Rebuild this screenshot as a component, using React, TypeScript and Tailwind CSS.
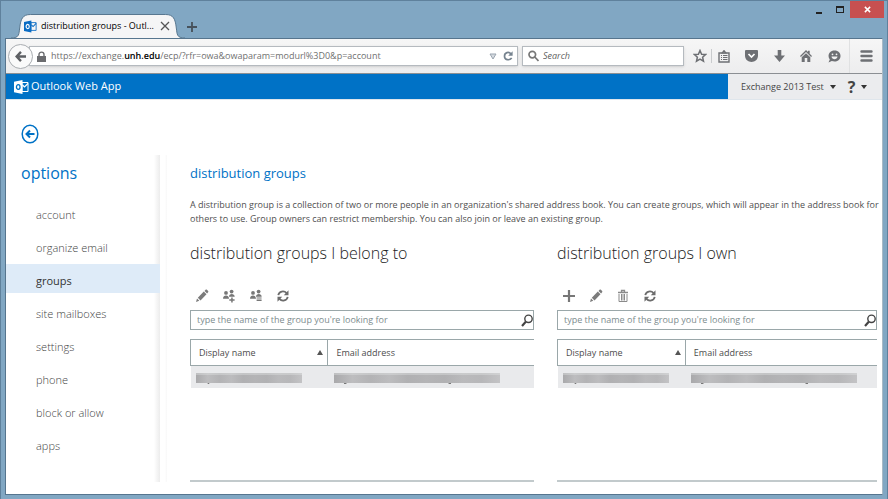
import type { ReactNode } from "react";

const navItems = [
  "account",
  "organize email",
  "groups",
  "site mailboxes",
  "settings",
  "phone",
  "block or allow",
  "apps",
];

function OutlookLogo({ className, main, ink }: { className: string; main: string; ink: string }) {
  return (
    <svg viewBox="0 0 30 28" className={className} aria-hidden="true">
      <path d="M16 5h12v18H16z" fill="none" stroke={main} strokeWidth="2" />
      <path d="M17 10l4 4 7-7" fill="none" stroke={main} strokeWidth="2.4" />
      <path d="M0 3.5L17 0v28L0 24.5z" fill={main} />
      <ellipse cx="8.5" cy="14" rx="3.6" ry="4.8" fill="none" stroke={ink} strokeWidth="2.6" />
    </svg>
  );
}

function PencilIcon() {
  return (
    <svg viewBox="0 0 14 14" className="size-3.5" fill="#7b7b7b" aria-hidden="true">
      <path d="M1 13l1-3.500 2.300 2.300zM2.800 8.700l6-6.200 2.700 2.700-6 6.200zM9.500 1.900l1.100-1.100c.4-.4.9-.4 1.300 0l1.200 1.200c.4.4.4.9 0 1.300L12.100 4.500z" />
    </svg>
  );
}

function PeopleIcon({ kind }: { kind: "join" | "leave" }) {
  return (
    <svg viewBox="0 0 14 14" className="size-3.5" fill="#777" aria-hidden="true">
      <circle cx="4" cy="3.900" r="1.900" />
      <circle cx="9.600" cy="2.600" r="1.900" />
      <path d="M1 9.800c0-4.400 6-4.400 6 0zM7 7.700C6.800 4 12.700 4 12.700 7.700z" />
      {kind === "join" ? (
        <path d="M9.200 8.400h1.500v1.900h1.900v1.400h-1.900v1.900H9.200v-1.900H7.300v-1.400h1.900z" />
      ) : (
        <path d="M7.600 8.500h5v.9h-5zM7.600 10.400h5v1.500h-5z" />
      )}
    </svg>
  );
}

function RefreshIcon() {
  return (
    <svg viewBox="0 0 14 14" className="size-3.5" fill="none" stroke="#6c6c6c" strokeWidth="1.800" aria-hidden="true">
      <path d="M2.300 6.200C3 2.200 8 1.200 10.600 4.200M11.700 7.800C11 11.800 6 12.800 3.400 9.800" />
      <path d="M12.500 1.200v5H7.800zM1.500 12.800v-5h4.700z" fill="#6c6c6c" stroke="none" />
    </svg>
  );
}

function TrashIcon() {
  return (
    <svg viewBox="0 0 14 14" className="size-3.5" fill="none" stroke="#8a8a8a" aria-hidden="true">
      <path d="M2 3.500h10M5.500 3V1.500h3V3" strokeWidth="1.300" />
      <path d="M3 5v7.500h8V5M5.500 5v6.500M7 5v6.500M8.500 5v6.500" />
    </svg>
  );
}

function PlusIcon({ className }: { className: string }) {
  return (
    <svg viewBox="0 0 12 12" className={className} stroke="currentColor" strokeWidth="2.200" aria-hidden="true">
      <path d="M6 0v12M0 6h12" />
    </svg>
  );
}

function IconButton({ label, children }: { label: string; children: ReactNode }) {
  return (
    <button type="button" aria-label={label} className="flex size-3.5 items-center justify-center text-[#777]">
      {children}
    </button>
  );
}

const smudgeShades = ["#a9a9ab", "#bdbdbf", "#b3b3b5", "#bcbcbe", "#b0b0b2", "#b4b4b6", "#b1b1b3", "#bababc", "#b7b7b9", "#c3c3c5"];

function Smudge({ id, tails, className }: { id: string; tails: number[]; className: string }) {
  return (
    <svg viewBox="0 0 100 11" preserveAspectRatio="none" className={className} role="img" aria-label="Hidden value">
      <defs>
        <linearGradient id={id}>
          {smudgeShades.map((shade, i) => (
            <stop key={i} offset={i / 9} stopColor={shade} />
          ))}
        </linearGradient>
      </defs>
      <rect width="100" height="10" fill={"url(#" + id + ")"} />
      <rect width="100" height="2" fill="#e9eaec" opacity=".35" />
      {tails.map((x) => (
        <rect key={x} x={x} y="10" width="1.500" height="1" fill="#777" />
      ))}
    </svg>
  );
}

function GroupPanel({ id, title, tools }: { id: string; title: string; tools: ReactNode }) {
  return (
    <section className="flex min-w-0 flex-col">
      <h2 className="text-[16px] leading-6 font-light whitespace-nowrap text-[#222]">{title}</h2>
      <div className="mt-6 flex h-3.5 gap-[13px] pl-[5px]">{tools}</div>
      <form className="mt-[7px] flex h-5 items-center border border-[#9aa7a9]" onSubmit={(e) => e.preventDefault()}>
        <input
          aria-label={title}
          placeholder="type the name of the group you're looking for"
          className="min-w-0 flex-1 pl-1.5 text-[9px] leading-4 text-[#555] outline-none placeholder:text-[#7d8c8e]"
        />
        <button type="submit" aria-label="Search groups" className="flex">
          <svg viewBox="0 0 12 13" className="h-[13px] w-3" fill="none" stroke="#444" aria-hidden="true">
            <circle cx="7.500" cy="4.800" r="3.700" strokeWidth="1.400" />
            <path d="M4.800 7.800L1 12" strokeWidth="2.200" />
          </svg>
        </button>
      </form>
      <div className="mt-[9px] flex-1 border-b-2 border-[#c2cacc]">
        <table className="w-full table-fixed border-collapse text-left text-[9px]">
          <thead>
            <tr className="h-[26px] border-t border-b border-[#9aa7a9] text-[#4c4c4c]">
              <th scope="col" className="w-2/5 border-r border-l border-[#9aa7a9] px-2 font-normal">
                <div className="flex items-center justify-between">
                  Display name
                  <svg viewBox="0 0 6 5" className="-mr-1 h-[5px] w-1.5 fill-[#555]" aria-hidden="true">
                    <path d="M3 0l3 5H0z" />
                  </svg>
                </div>
              </th>
              <th scope="col" className="px-2 font-normal">Email address</th>
            </tr>
          </thead>
          <tbody>
            <tr className="h-[22px] bg-[#e9eaec]">
              <td className="pl-[5px]">
                <Smudge id={id + "-name"} tails={[11]} className="mt-1 h-[11px] w-[106px]" />
              </td>
              <td className="pl-1.5">
                <Smudge id={id + "-mail"} tails={[6, 69]} className="mt-1 h-[11px] w-[166px]" />
              </td>
            </tr>
          </tbody>
        </table>
      </div>
    </section>
  );
}

function TitleBar() {
  return (
    <header className="flex h-[37px] items-start justify-between pl-1.5">
      <div className="flex h-[37px] items-end">
        <div className="relative flex h-6 w-[174px] items-center pl-[13px]">
          <svg viewBox="0 0 180 24" preserveAspectRatio="none" className="absolute inset-0 size-full" aria-hidden="true">
            <path d="M0 24C9 24 8 20 9 14C10 5 12 .5 20 .5H160C168 .5 170 5 171 14C172 20 171 24 180 24z" fill="#f5f5f6" />
            <path d="M0 24C9 24 8 20 9 14C10 5 12 .5 20 .5H160C168 .5 170 5 171 14C172 20 171 24 180 24" fill="none" stroke="#56758e" />
          </svg>
          <div className="relative flex w-full items-center">
            <OutlookLogo className="h-[13px] w-[13px]" main="#0a6cc4" ink="#fff" />
            <span className="ml-1 w-[115px] text-[9px] leading-4 whitespace-nowrap text-black">distribution groups - Outl...</span>
            <button type="button" aria-label="Close tab" className="ml-1 flex size-2.5 items-center justify-center">
              <svg viewBox="0 0 10 10" className="size-2.5" stroke="#555" strokeWidth="1.300" aria-hidden="true">
                <path d="M1 1l8 8M9 1l-8 8" />
              </svg>
            </button>
          </div>
        </div>
        <button type="button" aria-label="Open a new tab" className="mb-1.5 ml-0.5 flex text-[#47525c]">
          <PlusIcon className="size-2.5" />
        </button>
      </div>
      <div className="-mr-px flex h-[17px] items-stretch">
        <button type="button" aria-label="Minimize" className="flex w-[21px] items-end justify-center pb-1">
          <span className="h-0.5 w-1.5 bg-[#222]" />
        </button>
        <button type="button" aria-label="Maximize" className="flex w-[21px] items-center justify-center">
          <span className="h-[7px] w-2 border border-t-2 border-[#222]" />
        </button>
        <button type="button" aria-label="Close" className="flex w-[34px] items-center justify-center bg-[#c75050]">
          <svg viewBox="0 0 8 8" className="size-[7px]" stroke="#fff" strokeWidth="1.700" aria-hidden="true">
            <path d="M1 1l6 6M7 1L1 7" />
          </svg>
        </button>
      </div>
    </header>
  );
}

function BrowserBar() {
  return (
    <div className="flex h-[35px] shrink-0 items-center border-b border-[#8b8f93] bg-gradient-to-b from-[#f6f6f6] to-[#ededee]">
      <button type="button" aria-label="Back" className="z-10 ml-[2px] flex size-[25px] shrink-0 items-center justify-center rounded-full border border-[#a9adb1] bg-[#fafafa]">
        <svg viewBox="0 0 12 12" className="size-[11px]" fill="none" stroke="#5e6064" strokeWidth="2.600" aria-hidden="true">
          <path d="M12 6H2M6.500 1L1.800 6l4.700 5" />
        </svg>
      </button>
      <div className="relative -ml-1 flex h-5 min-w-0 flex-1 items-center border border-[#b5babf] bg-white pl-[7px] text-[9px] shadow-sm">
        <svg viewBox="0 0 9 11" className="h-[11px] w-[9px]" fill="#6b6c6f" aria-hidden="true">
          <path d="M0 5h9v6H0z" />
          <path d="M2 5V3.500C2 .3 7 .3 7 3.500V5" fill="none" stroke="#6b6c6f" strokeWidth="1.400" />
        </svg>
        <label htmlFor="url" className="ml-[5px] flex-1 truncate text-[#707070]">
          https://exchange.<span className="font-semibold text-black">unh.edu</span>/ecp/?rfr=owa&amp;owaparam=modurl%3D0&amp;p=account
        </label>
        <input id="url" className="absolute inset-y-0 left-6 right-10 bg-transparent outline-none" />
        <button type="button" aria-label="Show history" className="mr-1.5 flex">
          <svg viewBox="0 0 8 7" className="h-[7px] w-2" fill="#d5dae0" stroke="#9ba5b0" aria-hidden="true">
            <path d="M1 1h6L4 6z" />
          </svg>
        </button>
        <button type="button" aria-label="Reload" className="mr-1 flex">
          <svg viewBox="0 0 10 10" className="size-2.5" fill="none" stroke="#76838f" strokeWidth="1.700" aria-hidden="true">
            <path d="M8 3C5.800.2 1.500 1.500 1.500 5.200S6.300 10 8.700 7" />
            <path d="M9.600.3v4.500H5.200z" fill="#76838f" stroke="none" />
          </svg>
        </button>
      </div>
      <div className="ml-1 flex h-5 w-[162px] shrink-0 items-center border border-[#b5babf] bg-white pl-[5px] shadow-sm">
        <svg viewBox="0 0 11 12" className="h-3 w-[11px] shrink-0" fill="none" stroke="#777" strokeWidth="1.700" aria-hidden="true">
          <circle cx="4.300" cy="4.600" r="3.300" />
          <path d="M6.800 7l3.700 4" />
        </svg>
        <input aria-label="Search" placeholder="Search" className="ml-1 w-full text-[9px] outline-none placeholder:text-[#606060] placeholder:italic" />
      </div>
      <nav aria-label="Browser tools" className="ml-[9px] flex items-center text-[#6e7074]">
        <button type="button" aria-label="Bookmark" className="flex">
          <svg viewBox="0 0 14 14" className="size-3.5" fill="none" stroke="currentColor" strokeWidth="1.500" aria-hidden="true">
            <path d="M7 1.500l1.600 3.700 4 .3-3 2.700.9 4L7 10.100l-3.500 2.100.9-4-3-2.700 4-.3z" />
          </svg>
        </button>
        <span className="ml-1 h-3.5 w-px bg-[#c9cbcd]" />
        <button type="button" aria-label="Bookmarks menu" className="ml-1.5 flex">
          <svg viewBox="0 0 12 13" className="h-[13px] w-3" fill="none" stroke="currentColor" strokeWidth="1.400" aria-hidden="true">
            <path d="M1 3h10v9H1z" />
            <path d="M4 3l2-2.500L8 3zM3 5.500h1M5 5.500h4.500M3 7.500h1M5 7.500h4.500M3 9.500h1M5 9.500h4.500" strokeWidth="1.100" />
          </svg>
        </button>
        <button type="button" aria-label="Pocket" className="ml-[15px] flex">
          <svg viewBox="0 0 13 12" className="h-3 w-[13px]" aria-hidden="true">
            <path d="M1 0h11q1 0 1 1v4.500C13 14 0 14 0 5.500V1q0-1 1-1z" fill="currentColor" />
            <path d="M3.500 4l3 3 3-3" fill="none" stroke="#fff" strokeWidth="1.700" />
          </svg>
        </button>
        <button type="button" aria-label="Downloads" className="ml-4 flex">
          <svg viewBox="0 0 11 12" className="h-3 w-[11px]" fill="currentColor" aria-hidden="true">
            <path d="M3.700 0h3.600v5.500H11L5.500 12 0 5.500h3.700z" />
          </svg>
        </button>
        <button type="button" aria-label="Home" className="ml-[15px] flex">
          <svg viewBox="0 0 12 12" className="size-3" fill="currentColor" aria-hidden="true">
            <path d="M6 0l2 2V.8h1.700v3L12 6l-.9 1L6 2.100.9 7 0 6z" />
            <path d="M6 3.300L10.300 7.300V12H7.300V8H4.700v4h-3V7.300z" />
          </svg>
        </button>
        <button type="button" aria-label="Hello" className="ml-4 flex">
          <svg viewBox="0 0 13 13" className="size-[13px]" aria-hidden="true">
            <path d="M6.500.5c8 0 8 11 0 11-1 0-2-.2-2.700-.5L.5 12.500 1.800 9.500C-1 6 1 .5 6.500.5z" fill="currentColor" />
            <path d="M3.500 6.500h6C9 10 4 10 3.500 6.500z" fill="#f2f2f2" />
            <circle cx="4.500" cy="4.300" r=".9" fill="#f2f2f2" />
            <circle cx="8.500" cy="4.300" r=".9" fill="#f2f2f2" />
          </svg>
        </button>
        <span className="ml-2 h-[34px] w-px bg-[#e0e1e2]" />
        <button type="button" aria-label="Open menu" className="mr-[9px] ml-2.5 flex">
          <svg viewBox="0 0 13 12" className="h-3 w-[13px]" stroke="currentColor" strokeWidth="2.400" strokeLinecap="round" aria-hidden="true">
            <path d="M1.500 1.500h10M1.500 6h10M1.500 10.500h10" />
          </svg>
        </button>
      </nav>
    </div>
  );
}

function Caret() {
  return (
    <svg viewBox="0 0 6 4" className="h-1 w-1.5 fill-[#333]" aria-hidden="true">
      <path d="M0 0h6L3 4z" />
    </svg>
  );
}

export default function App() {
  return (
    <div className="flex min-h-screen flex-col border border-b-0 border-[#5f819c] bg-[#81a7c3] px-1 pb-1 font-['Open_Sans','Noto_Sans',sans-serif]">
      <TitleBar />
      <div className="flex flex-1 flex-col border border-t-[#56758e] border-r-[#a9bac6] border-b-[#56758e] border-l-[#56758e] bg-white">
        <BrowserBar />
        <div className="flex h-[26px] shrink-0 border-b border-[#dfe6ec] bg-[#ebecee]">
          <div className="flex flex-1 items-center bg-[#0072c6] pl-2">
            <OutlookLogo className="h-4 w-[15px]" main="#fff" ink="#0072c6" />
            <h1 className="ml-0.5 text-[11px] text-white">Outlook Web App</h1>
          </div>
          <div className="flex w-[154px] items-center pl-[13px] text-[#444]">
            <button type="button" className="flex items-center gap-1.5 text-[9px] whitespace-nowrap">
              Exchange 2013 Test
              <Caret />
            </button>
            <button type="button" aria-label="Help" className="ml-3 flex items-center gap-1.5 text-[16px] leading-5 font-bold">
              ?
              <Caret />
            </button>
          </div>
        </div>
        <div className="px-[15px] pt-6">
          <button type="button" aria-label="Back to mail" className="flex text-[#0072c6]">
            <svg viewBox="0 0 18 20" className="h-5 w-[18px]" fill="none" stroke="currentColor" aria-hidden="true">
              <ellipse cx="9" cy="10" rx="7.800" ry="8.700" strokeWidth="1.500" />
              <path d="M13.500 10H6M9 6.500L5.500 10 9 13.500" strokeWidth="2" />
            </svg>
          </button>
        </div>
        <div className="mt-[11px] flex flex-1 pb-3">
          <aside className="flex w-[154px] shrink-0 flex-col bg-gradient-to-l from-[#ececec] to-white to-[4%]">
            <h2 className="pt-1.5 pl-[15px] text-[16px] leading-6 text-[#0072c6]">options</h2>
            <nav aria-label="Options" className="mt-[13px] flex flex-col gap-1">
              {navItems.map((item) => (
                <a
                  key={item}
                  href={"#" + item.replace(/ /g, "-")}
                  className={
                    item === "groups"
                      ? "flex h-[29px] items-center bg-[#deebf8] pt-1.5 pl-[30px] text-[11px] text-[#333]"
                      : "flex h-[29px] items-center pt-1.5 pl-[30px] text-[11px] font-light text-[#444]"
                  }
                >
                  {item}
                </a>
              ))}
            </nav>
          </aside>
          <div className="w-[7px] shrink-0 bg-gradient-to-r from-white from-[70%] to-[#f8f8f8]" />
          <main className="ml-[23px] flex min-w-0 flex-1 flex-col pr-[5px]">
            <h1 className="pt-2 text-[13px] leading-5 text-[#0072c6]">distribution groups</h1>
            <p className="-mr-1 mt-[15px] text-[9px] leading-[14px] text-[#505050]">
              A distribution group is a collection of two or more people in an organization's shared address book. You can create groups, which will appear in the address book for others to use. Group owners can restrict membership. You can also join or leave an existing group.
            </p>
            <div className="mt-[15px] grid flex-1 grid-cols-[344fr_320fr] gap-[23px]">
              <GroupPanel
                id="member"
                title="distribution groups I belong to"
                tools={
                  <>
                    <IconButton label="Details"><PencilIcon /></IconButton>
                    <IconButton label="Join"><PeopleIcon kind="join" /></IconButton>
                    <IconButton label="Leave"><PeopleIcon kind="leave" /></IconButton>
                    <IconButton label="Refresh"><RefreshIcon /></IconButton>
                  </>
                }
              />
              <GroupPanel
                id="owner"
                title="distribution groups I own"
                tools={
                  <>
                    <IconButton label="New"><PlusIcon className="size-3" /></IconButton>
                    <IconButton label="Edit"><PencilIcon /></IconButton>
                    <IconButton label="Delete"><TrashIcon /></IconButton>
                    <IconButton label="Refresh"><RefreshIcon /></IconButton>
                  </>
                }
              />
            </div>
          </main>
        </div>
      </div>
    </div>
  );
}
